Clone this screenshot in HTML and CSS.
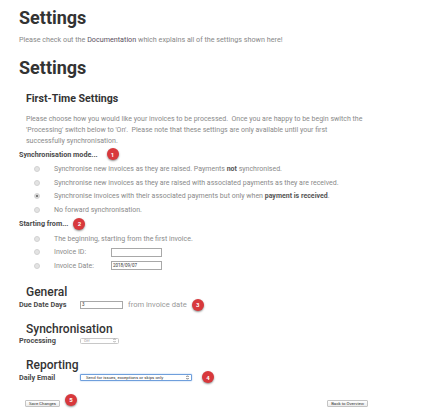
FILE: index.html
```html
<!DOCTYPE html>
<html lang="en">
<head>
<meta charset="utf-8">
<title>Settings</title>
<link rel="stylesheet" href="styles.css">
</head>
<body>
<div class="page">
  <h1 class="title first">Settings</h1>
  <p class="intro">Please check out the <a class="doc-link" href="#">Documentation</a> which explains all of the settings shown here!</p>
  <h1 class="title second">Settings</h1>

  <h2 class="section-title ft">First-Time Settings</h2>
  <p class="para">Please choose how you would like your invoices to be processed.&nbsp; Once you are happy to be begin switch the<br>'Processing' switch below to 'On'.&nbsp; Please note that these settings are only available until your first<br>successfully synchronisation.</p>

  <div class="label-row"><span class="label">Synchronisation mode...</span><span class="badge b1">1</span></div>
  <ul class="options">
    <li class="option"><span class="radio"></span><span>Synchronise new invoices as they are raised. Payments <b>not</b> synchronised.</span></li>
    <li class="option"><span class="radio"></span><span>Synchronise new invoices as they are raised with associated payments as they are received.</span></li>
    <li class="option"><span class="radio checked"></span><span>Synchronise invoices with their associated payments but only when <b>payment is received</b>.</span></li>
    <li class="option"><span class="radio"></span><span>No forward synchronisation.</span></li>
  </ul>

  <div class="label-row"><span class="label">Starting from...</span><span class="badge b2">2</span></div>
  <ul class="options">
    <li class="option"><span class="radio"></span><span>The beginning, starting from the first invoice.</span></li>
    <li class="option"><span class="radio"></span><span class="opt-label">Invoice ID:</span><span class="text-input"></span></li>
    <li class="option"><span class="radio"></span><span class="opt-label">Invoice Date:</span><span class="text-input">2018/09/07</span></li>
  </ul>

  <h2 class="section-title gen">General</h2>
  <div class="field-row due">
    <span class="label field-label">Due Date Days</span>
    <span class="text-input days">3</span>
    <span class="suffix">from invoice date</span>
    <span class="badge b3">3</span>
  </div>

  <h2 class="section-title sync">Synchronisation</h2>
  <div class="field-row proc">
    <span class="label field-label">Processing</span>
    <span class="select small"><span>Off</span><svg class="arrows" viewBox="0 0 4 6" width="3" height="5"><path d="M0.5 2.3 L2 0.7 L3.5 2.3 M0.5 3.7 L2 5.3 L3.5 3.7" fill="none" stroke="#777" stroke-width="0.8"/></svg></span>
  </div>

  <h2 class="section-title rep">Reporting</h2>
  <div class="field-row mail">
    <span class="label field-label">Daily Email</span>
    <span class="select wide"><span>Send for issues, exceptions or skips only</span><svg class="arrows" viewBox="0 0 4 6" width="3" height="5"><path d="M0.5 2.3 L2 0.7 L3.5 2.3 M0.5 3.7 L2 5.3 L3.5 3.7" fill="none" stroke="#333" stroke-width="0.9"/></svg></span>
    <span class="badge b4">4</span>
  </div>

  <div class="actions">
    <div class="save-group"><span class="btn">Save Changes</span><span class="badge b5">5</span></div>
    <span class="btn">Back to Overview</span>
  </div>
</div>
</body>
</html>
```
FILE: styles.css
```css
html, body {
  margin: 0;
  padding: 0;
  background: #ffffff;
}
body {
  font-family: Roboto, "Liberation Sans", sans-serif;
  color: #8a8a8a;
}
.page {
  padding-left: 19px;
  width: 380px;
}
.title {
  font-size: 18px;
  font-weight: 700;
  color: #333333;
  line-height: 20px;
  margin: 0;
}
.title.first { margin-top: 8px; }
.title.second { margin-top: 13px; }
.intro {
  font-size: 7.2px;
  line-height: 10px;
  margin: 7px 0 0 0;
  color: #888888;
}
.doc-link {
  color: #5a5060;
  text-decoration: none;
}
.section-title {
  margin: 0;
  padding-left: 7px;
  color: #333333;
  font-weight: 500;
  font-size: 12px;
  line-height: 14px;
}
.section-title.ft { margin-top: 14px; font-size: 10.6px; font-weight: 700; }
.section-title.gen { margin-top: 12px; }
.section-title.sync { margin-top: 11px; }
.section-title.rep { margin-top: 12px; }
.para {
  margin: 8px 0 0 0;
  padding-left: 7px;
  font-size: 7px;
  line-height: 11px;
  color: #8a8a8a;
  white-space: nowrap;
}
.label-row {
  display: flex;
  align-items: center;
  height: 14px;
}
.label {
  font-size: 7.2px;
  font-weight: 700;
  color: #4a4a4a;
}
.badge {
  display: inline-flex;
  align-items: center;
  justify-content: center;
  width: 12px;
  height: 12px;
  border-radius: 50%;
  background: #d8383c;
  color: #ffffff;
  font-size: 6px;
  font-weight: 700;
  box-shadow: 0 1px 2px rgba(0, 0, 0, 0.45);
  flex: none;
}
.b1 { margin-left: 9px; }
.b2 { margin-left: 5px; }
.b3 { margin-left: 5px; }
.b4 { margin-left: 10px; }
.b5 { margin-left: 5px; margin-top: -7px; }
.options {
  list-style: none;
  margin: 1.5px 0 0 0;
  padding: 0;
}
.option {
  display: flex;
  align-items: center;
  height: 13.5px;
  font-size: 7px;
  color: #8a8a8a;
}
.option b { color: #555555; }
.radio {
  width: 4px;
  height: 4px;
  border-radius: 50%;
  background: #e3e3e3;
  border: 0.5px solid #d2d2d2;
  margin-left: 15px;
  margin-right: 14px;
  flex: none;
}
.radio.checked {
  background: radial-gradient(circle, #7a7a7a 0 45%, #d8d8d8 55%);
}
.opt-label {
  width: 57px;
}
.text-input {
  display: inline-flex;
  align-items: center;
  box-sizing: border-box;
  width: 51px;
  height: 9px;
  border: 1px solid #a8a8a8;
  background: #ffffff;
  font-size: 4.5px;
  color: #333333;
  padding-left: 1px;
}
.field-row {
  display: flex;
  align-items: center;
}
.field-row.due { height: 12px; }
.field-row.proc { height: 10px; }
.field-row.mail { height: 11px; }
.field-label {
  width: 61px;
  flex: none;
  font-size: 7.3px;
}
.text-input.days {
  width: 43px;
  height: 8px;
}
.suffix {
  margin-left: 5px;
  font-size: 7.6px;
  color: #999999;
}
.select {
  display: inline-flex;
  align-items: center;
  justify-content: space-between;
  box-sizing: border-box;
  background: #ffffff;
  color: #555555;
  flex: none;
}
.select.small {
  width: 39px;
  height: 6px;
  border: 0.5px solid #c8c8c8;
  border-radius: 1.5px;
  font-size: 4px;
  padding: 0 2px 0 3px;
  color: #999999;
}
.select.wide {
  width: 112px;
  height: 7px;
  border: 0.8px solid #6f9fdc;
  box-shadow: 0 0 1.5px #8ab4ea;
  border-radius: 1px;
  font-size: 4.3px;
  padding: 0 2px 0 5px;
  color: #333333;
}
.arrows { flex: none; }
.actions {
  display: flex;
  align-items: center;
  justify-content: space-between;
  margin-top: 14.5px;
  margin-left: 6px;
  width: 343px;
  height: 12px;
}
.save-group {
  display: flex;
  align-items: center;
}
.btn {
  display: inline-flex;
  align-items: center;
  justify-content: center;
  box-sizing: border-box;
  height: 7px;
  padding: 0 3px;
  border: 0.5px solid #c4c4c4;
  border-radius: 1px;
  background: linear-gradient(#ffffff, #ececec);
  font-size: 4.3px;
  color: #333333;
}
```
